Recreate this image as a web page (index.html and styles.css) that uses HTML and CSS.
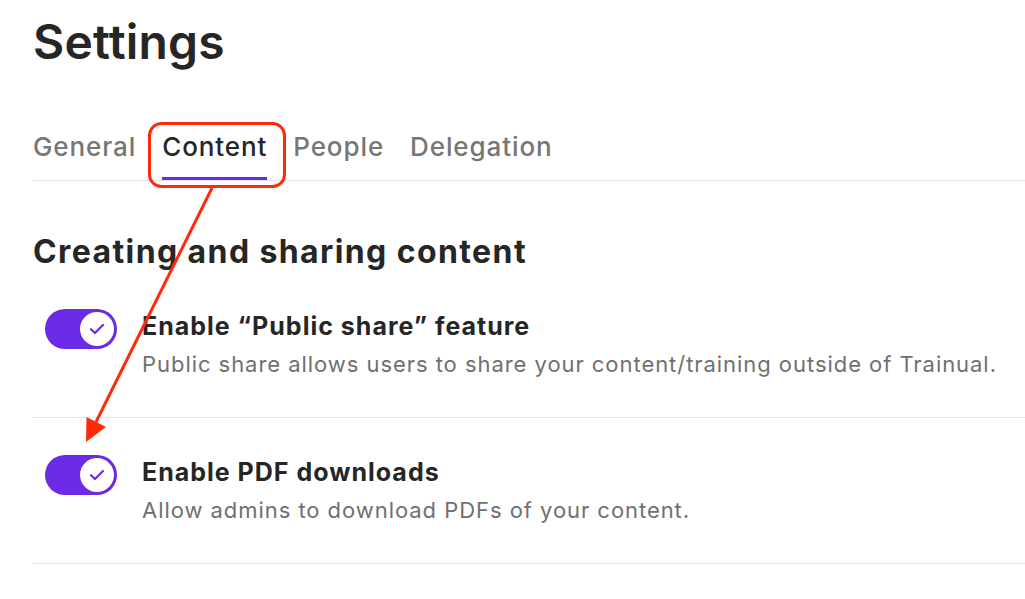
FILE: index.html
```html
<!DOCTYPE html>
<html lang="en">
<head>
    <meta charset="UTF-8">
    <title>Settings</title>
    <link rel="stylesheet" href="styles.css">
</head>
<body>
<div class="page">
    <h1 class="page-title">Settings</h1>

    <ul class="tabs">
        <li class="tab">General</li>
        <li class="tab active">Content</li>
        <li class="tab">People</li>
        <li class="tab">Delegation</li>
    </ul>

    <h2 class="section-title">Creating and sharing content</h2>

    <div class="setting">
        <div class="toggle">
            <span class="knob">
                <svg width="16" height="12" viewBox="0 0 16 12"><path d="M2 6.2 L6 10 L14 2" fill="none" stroke="#6b2be6" stroke-width="2.2" stroke-linecap="round" stroke-linejoin="round"/></svg>
            </span>
        </div>
        <div class="setting-text">
            <div class="setting-name">Enable “Public share” feature</div>
            <div class="setting-desc">Public share allows users to share your content/training outside of Trainual.</div>
        </div>
    </div>

    <div class="setting">
        <div class="toggle">
            <span class="knob">
                <svg width="16" height="12" viewBox="0 0 16 12"><path d="M2 6.2 L6 10 L14 2" fill="none" stroke="#6b2be6" stroke-width="2.2" stroke-linecap="round" stroke-linejoin="round"/></svg>
            </span>
        </div>
        <div class="setting-text">
            <div class="setting-name">Enable PDF downloads</div>
            <div class="setting-desc">Allow admins to download PDFs of your content.</div>
        </div>
    </div>
</div>

<!-- annotation -->
<svg class="callout" width="1025" height="599" viewBox="0 0 1025 599">
    <rect x="149.5" y="123.5" width="135" height="63" rx="12" fill="none" stroke="#ff2a0a" stroke-width="3"/>
    <line x1="212" y1="188" x2="96" y2="422" stroke="#ff2a0a" stroke-width="3"/>
    <polygon points="86,442 86.5,417 106,427" fill="#ff2a0a"/>
</svg>
</body>
</html>
```

FILE: styles.css
```css
* {
    padding: 0;
    margin: 0;
    box-sizing: border-box;
}

ul {
    list-style: none;
}

body {
    background: #fff;
    font-family: Inter, "Noto Sans", sans-serif;
    color: #262626;
    overflow: hidden;
}

.page {
    padding: 12px 0 0 33px;
}

.page-title {
    font-size: 48px;
    font-weight: 600;
    line-height: 60px;
    letter-spacing: 0.2px;
    margin-bottom: 57px;
}

.tabs {
    display: flex;
    gap: 26px;
    border-bottom: 1px solid #e6e6e6;
}

.tab {
    font-size: 26px;
    font-weight: 500;
    line-height: 36px;
    letter-spacing: 0.9px;
    color: #767676;
    padding-bottom: 15px;
}

.tab.active {
    color: #262626;
    padding-bottom: 12px;
    border-bottom: 3px solid #6b2be6;
}

.section-title {
    font-size: 32px;
    font-weight: 700;
    line-height: 40px;
    letter-spacing: 1.4px;
    margin-top: 51px;
}

.setting {
    display: flex;
    align-items: flex-start;
    gap: 25px;
    padding: 39px 0 38px 12px;
    border-bottom: 1px solid #e6e6e6;
}

.toggle {
    width: 72px;
    height: 40px;
    border-radius: 20px;
    background: #6b2be6;
    margin-top: -2px;
    display: flex;
    align-items: center;
    justify-content: flex-end;
    padding-right: 3px;
    flex-shrink: 0;
}

.knob {
    width: 34px;
    height: 34px;
    border-radius: 50%;
    background: #fff;
    display: flex;
    align-items: center;
    justify-content: center;
}

.setting-name {
    font-size: 25px;
    font-weight: 700;
    line-height: 30px;
    letter-spacing: 1px;
}

.setting-desc {
    font-size: 22px;
    line-height: 30px;
    letter-spacing: 0.95px;
    color: #707070;
    margin-top: 8px;
}

.callout {
    position: absolute;
    left: 0;
    top: 0;
    pointer-events: none;
}
```
